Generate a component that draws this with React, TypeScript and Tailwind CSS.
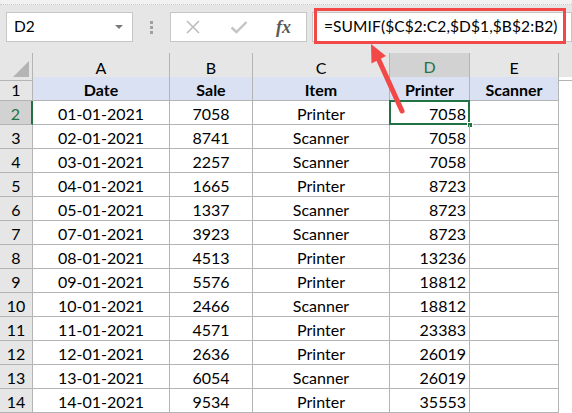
import React from 'react';

const rows: [string, string, string, string][] = [
  ['01-01-2021', '7058', 'Printer', '7058'],
  ['02-01-2021', '8741', 'Scanner', '7058'],
  ['03-01-2021', '2257', 'Scanner', '7058'],
  ['04-01-2021', '1665', 'Printer', '8723'],
  ['05-01-2021', '1337', 'Scanner', '8723'],
  ['07-01-2021', '3923', 'Scanner', '8723'],
  ['08-01-2021', '4513', 'Printer', '13236'],
  ['09-01-2021', '5576', 'Printer', '18812'],
  ['10-01-2021', '2466', 'Scanner', '18812'],
  ['11-01-2021', '4571', 'Printer', '23383'],
  ['12-01-2021', '2636', 'Printer', '26019'],
  ['13-01-2021', '6054', 'Scanner', '26019'],
  ['14-01-2021', '9534', 'Printer', '35553'],
];

const cols = 'grid grid-cols-[33px_137px_83px_137px_80px_89px_1fr]';
const cell = 'h-[24px] border-r border-b border-[#b4b4b4] flex items-center pt-[2px]';

export default function App() {
  return (
    <div className="relative w-[572px] h-[413px] overflow-hidden bg-white text-[16px] text-black" style={{ fontFamily: 'Lato, "Open Sans", sans-serif' }}>
      {/* toolbar */}
      <div className="h-[5px] bg-[#f1f1f1] border-b border-dotted border-[#c8c8c8]" />
      <div className="h-[48px] bg-[#e6e6e6] flex items-start pt-[7px]">
        <div className="ml-[6px] w-[127px] h-[30px] bg-white border border-[#c6c6c6] flex items-center pl-[7px] pr-[9px] justify-between text-[15.5px]">
          <span>D2</span>
          <span className="w-0 h-0 border-l-[4px] border-r-[4px] border-t-[4px] border-l-transparent border-r-transparent border-t-[#7a7a7a]" />
        </div>
        <div className="w-[37px] h-[30px] flex flex-col items-center justify-center gap-[2px]">
          <span className="w-[3px] h-[3px] bg-[#a0a0a0]" />
          <span className="w-[3px] h-[3px] bg-[#a0a0a0]" />
          <span className="w-[3px] h-[3px] bg-[#a0a0a0]" />
        </div>
        <div className="w-[137px] h-[30px] bg-white border border-[#c6c6c6] flex items-center">
          <svg width="16" height="16" viewBox="0 0 16 16" className="ml-[14px]">
            <path d="M2 2L14 14M14 2L2 14" stroke="#bdbdbd" strokeWidth="1.6" />
          </svg>
          <svg width="18" height="14" viewBox="0 0 18 14" className="ml-[29px]">
            <path d="M1.5 7.5L6.5 12L16.5 2" stroke="#c4c4c4" strokeWidth="2.4" fill="none" />
          </svg>
          <span className="ml-[28px] italic font-bold text-[#5a5a5a] text-[18px]" style={{ fontFamily: '"Liberation Serif", serif' }}>fx</span>
        </div>
        <div className="ml-[5px] flex-1 h-[30px] bg-white border border-[#c6c6c6] flex items-center pl-[11px] text-[15.5px] tracking-[0.1px]">
          =SUMIF($C$2:C2,$D$1,$B$2:B2)
        </div>
      </div>

      {/* column headers */}
      <div className={`${cols} h-[24px] bg-[#e6e6e6]`}>
        <div className="border-r border-b border-[#b4b4b4] relative">
          <svg width="16" height="16" viewBox="0 0 16 16" className="absolute right-[3px] bottom-[3px]">
            <path d="M16 0V16H0Z" fill="#b4b4b4" />
          </svg>
        </div>
        {['A', 'B', 'C', 'D', 'E'].map((c) => (
          <div
            key={c}
            className={
              c === 'D'
                ? 'border-r border-[#b4b4b4] border-b-2 border-b-[#217346] bg-[#d2d2d2] text-[#217346] flex items-center justify-center pt-[2px]'
                : 'border-r border-b border-[#b4b4b4] flex items-center justify-center pt-[2px]'
            }
          >
            {c}
          </div>
        ))}
        <div className="border-b border-[#b4b4b4]" />
      </div>

      {/* header row */}
      <div className={cols}>
        <div className={`${cell} justify-center bg-[#e6e6e6]`}>1</div>
        <div className={`${cell} justify-center bg-[#d9e1f2] font-bold`}>Date</div>
        <div className={`${cell} justify-center bg-[#d9e1f2] font-bold`}>Sale</div>
        <div className={`${cell} justify-center bg-[#d9e1f2] font-bold`}>Item</div>
        <div className={`${cell} justify-center bg-[#d9e1f2] font-bold`}>Printer</div>
        <div className={`${cell} justify-center bg-[#d9e1f2] font-bold`}>Scanner</div>
        <div />
      </div>

      {rows.map((r, i) => {
        const n = i + 2;
        const sel = n === 2;
        return (
          <div key={n} className={cols}>
            <div
              className={
                sel
                  ? `${cell} justify-center bg-[#d2d2d2] text-[#217346] border-r-2 border-r-[#217346]`
                  : `${cell} justify-center bg-[#e6e6e6]`
              }
            >
              {n}
            </div>
            <div className={`${cell} justify-center`}>{r[0]}</div>
            <div className={`${cell} justify-center`}>{r[1]}</div>
            <div className={`${cell} justify-center`}>{r[2]}</div>
            <div className={`${cell} justify-end pr-[3px] relative`}>
              {r[3]}
              {sel && (
                <>
                  <span className="absolute -left-[1px] -top-[1px] w-[81px] h-[25px] border-2 border-[#217346]" />
                  <span className="absolute -right-[4px] -bottom-[4px] w-[6px] h-[6px] bg-[#217346] border border-white" />
                </>
              )}
            </div>
            <div className={cell} />
            <div />
          </div>
        );
      })}

      {/* annotation */}
      <div className="absolute left-[314px] top-[8px] w-[252px] h-[36px] border-[3px] border-[#f24848] pointer-events-none" />
      <svg className="absolute left-0 top-0 pointer-events-none" width="572" height="413" viewBox="0 0 572 413">
        <line x1="402" y1="111" x2="377" y2="56" stroke="#f24848" strokeWidth="5" strokeLinecap="round" />
        <polygon points="371,44 386,56 371.5,63.5" fill="#f24848" />
      </svg>
    </div>
  );
}
